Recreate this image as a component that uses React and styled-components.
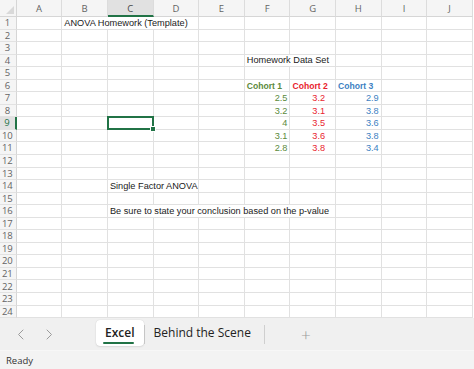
import React from 'react'
import styled, { createGlobalStyle } from 'styled-components'

const GlobalStyle = createGlobalStyle`
  html, body {
    margin: 0;
    padding: 0;
    background: #ffffff;
    overflow: hidden;
  }
`;

const Window = styled.div`
  width: 474px;
  height: 369px;
  display: flex;
  flex-direction: column;
  background: #ffffff;
  font-family: "Open Sans", "Noto Sans", sans-serif;
`;

const Sheet = styled.div`
  display: grid;
  grid-template-columns: 16.7px repeat(10, 45.63px);
  grid-template-rows: 17px repeat(24, 12.55px);
  height: 318.2px;
  overflow: hidden;
`;

const Corner = styled.div`
  position: relative;
  background: #f5f5f5;
  border-right: 1px solid #d6d6d6;
  border-bottom: 1px solid #d6d6d6;

  &::after {
    content: "";
    position: absolute;
    right: 2px;
    bottom: 2px;
    width: 0;
    height: 0;
    border-left: 8px solid transparent;
    border-bottom: 8px solid #d9d9d9;
  }
`;

const ColHead = styled.div`
  display: flex;
  align-items: center;
  justify-content: center;
  background: ${p => (p.$active ? '#e1e1e1' : '#f5f5f5')};
  border-right: 1px solid #dcdcdc;
  border-bottom: ${p => (p.$active ? '2px solid #217346' : '1px solid #d6d6d6')};
  color: ${p => (p.$active ? '#4a4a4a' : '#646464')};
  font-size: 9.5px;
  padding-top: 1px;
`;

const RowHead = styled.div`
  display: flex;
  align-items: center;
  justify-content: center;
  background: ${p => (p.$active ? '#e1e1e1' : '#f5f5f5')};
  border-right: ${p => (p.$active ? '2px solid #217346' : '1px solid #d6d6d6')};
  border-bottom: 1px solid #e2e2e2;
  color: ${p => (p.$active ? '#217346' : '#646464')};
  font-size: 9.5px;
  line-height: 1;
  padding-right: 1px;
`;

const toneColor = {
  ink: '#1a1a1a',
  green: '#5b8a3c',
  red: '#e91d2e',
  blue: '#3d7fc2',
};

const Cell = styled.div`
  position: relative;
  grid-column: span ${p => p.$span || 1};
  display: flex;
  align-items: center;
  justify-content: ${p => (p.$right ? 'flex-end' : 'flex-start')};
  padding: 1px ${p => p.$padRight ?? 2}px 0 2px;
  border-right: 1px solid #e1e1e1;
  border-bottom: 1px solid #e1e1e1;
  white-space: nowrap;
  font-family: "Liberation Sans", Arial, sans-serif;
  font-size: ${p => (p.$bold ? '8.6px' : '9.2px')};
  font-weight: ${p => (p.$bold ? 700 : 400)};
  color: ${p => toneColor[p.$tone || 'ink']};
  line-height: 1;

  ${p => p.$selected && `
    &::after {
      content: "";
      position: absolute;
      left: -1px;
      top: -1px;
      right: -1px;
      bottom: -1px;
      border: 2px solid #217346;
      z-index: 2;
    }
    &::before {
      content: "";
      position: absolute;
      right: -3px;
      bottom: -3px;
      width: 4px;
      height: 4px;
      background: #217346;
      border: 1px solid #ffffff;
      z-index: 3;
    }
  `}
`;

const TabBar = styled.div`
  height: 32px;
  display: flex;
  align-items: flex-start;
  background: #f0f0f0;
  border-bottom: 1px solid #f7f7f7;
`;

const Nav = styled.div`
  display: flex;
  align-items: center;
  gap: 18px;
  height: 32px;
  padding-left: 15px;
  width: 81px;
`;

const NavButton = styled.div`
  width: 11px;
  display: flex;
  justify-content: center;
  color: #9a9a9a;
`;

const Tab = styled.div`
  position: relative;
  margin-top: 2px;
  height: 25px;
  display: flex;
  align-items: center;
  padding: 0 9px 1px;
  border-radius: 4px;
  background: ${p => (p.$active ? '#ffffff' : 'transparent')};
  box-shadow: ${p => (p.$active ? '0 0 1px rgba(0,0,0,0.18), 0 1px 2px rgba(0,0,0,0.08)' : 'none')};
  font-size: 12px;
  font-weight: ${p => (p.$active ? 600 : 400)};
  color: #222222;
  white-space: nowrap;

  ${p => p.$active && `
    &::after {
      content: "";
      position: absolute;
      left: 7px;
      right: 10px;
      bottom: 2px;
      height: 2px;
      border-radius: 1px;
      background: #217346;
    }
  `}
`;

const Divider = styled.div`
  width: 1px;
  height: 19px;
  margin: 7px 0 0 ${p => p.$before || 0}px;
  background: #cfcfcf;
`;

const AddButton = styled.div`
  height: 32px;
  display: flex;
  align-items: center;
  color: #9a9a9a;
  font-size: 17px;
  font-weight: 300;
  margin-left: 36px;
`;

const StatusBar = styled.div`
  flex: 1;
  display: flex;
  align-items: center;
  padding-left: 6px;
  background: #f3f3f3;
  font-size: 9.5px;
  color: #333333;
`;

const columns = ['A', 'B', 'C', 'D', 'E', 'F', 'G', 'H', 'I', 'J'];

const cohorts = [
  [2.5, 3.2, 2.9],
  [3.2, 3.1, 3.8],
  [4, 3.5, 3.6],
  [3.1, 3.6, 3.8],
  [2.8, 3.8, 3.4],
];

const content = {
  1: [{ col: 1, span: 3, text: 'ANOVA Homework (Template)' }],
  4: [{ col: 5, span: 2, text: 'Homework Data Set' }],
  6: [
    { col: 5, text: 'Cohort 1', tone: 'green', bold: true },
    { col: 6, text: 'Cohort 2', tone: 'red', bold: true },
    { col: 7, text: 'Cohort 3', tone: 'blue', bold: true },
  ],
  14: [{ col: 2, span: 2, text: 'Single Factor ANOVA' }],
  16: [{ col: 2, span: 5, text: 'Be sure to state your conclusion based on the p-value' }],
};

cohorts.forEach((vals, i) => {
  content[7 + i] = [
    { col: 5, text: String(vals[0]), tone: 'green', right: true, pad: 2 },
    { col: 6, text: String(vals[1]), tone: 'red', right: true, pad: 10 },
    { col: 7, text: String(vals[2]), tone: 'blue', right: true, pad: 2 },
  ];
});

const Chevron = ({ dir }) => (
  <svg width="7" height="11" viewBox="0 0 7 11" fill="none">
    <path
      d={dir === 'left' ? 'M6 1 L1.5 5.5 L6 10' : 'M1 1 L5.5 5.5 L1 10'}
      stroke="currentColor"
      strokeWidth="1"
      strokeLinecap="round"
      strokeLinejoin="round"
    />
  </svg>
);

const renderRow = (row) => {
  const items = content[row] || [];
  const out = [
    <RowHead key={`h${row}`} $active={row === 9}>{row}</RowHead>,
  ];
  let c = 0;
  while (c < columns.length) {
    const item = items.find(it => it.col === c);
    if (item) {
      out.push(
        <Cell
          key={`${row}-${c}`}
          $span={item.span}
          $tone={item.tone}
          $bold={item.bold}
          $right={item.right}
          $padRight={item.pad}
        >
          {item.text}
        </Cell>
      );
      c += item.span || 1;
    } else {
      out.push(<Cell key={`${row}-${c}`} $selected={row === 9 && c === 2} />);
      c += 1;
    }
  }
  return out;
};

const App = () => {
  const rows = Array.from({ length: 24 }, (_, i) => i + 1);
  return (
    <>
      <GlobalStyle />
      <Window>
        <Sheet>
          <Corner />
          {columns.map(col => (
            <ColHead key={col} $active={col === 'C'}>{col}</ColHead>
          ))}
          {rows.map(renderRow)}
        </Sheet>

        <TabBar>
          <Nav>
            <NavButton><Chevron dir="left" /></NavButton>
            <NavButton><Chevron dir="right" /></NavButton>
          </Nav>
          <Tab $active>Excel</Tab>
          <Divider />
          <Tab>Behind the Scene</Tab>
          <Divider $before={4} />
          <AddButton>+</AddButton>
        </TabBar>

        <StatusBar>Ready</StatusBar>
      </Window>
    </>
  )
}

export default App
